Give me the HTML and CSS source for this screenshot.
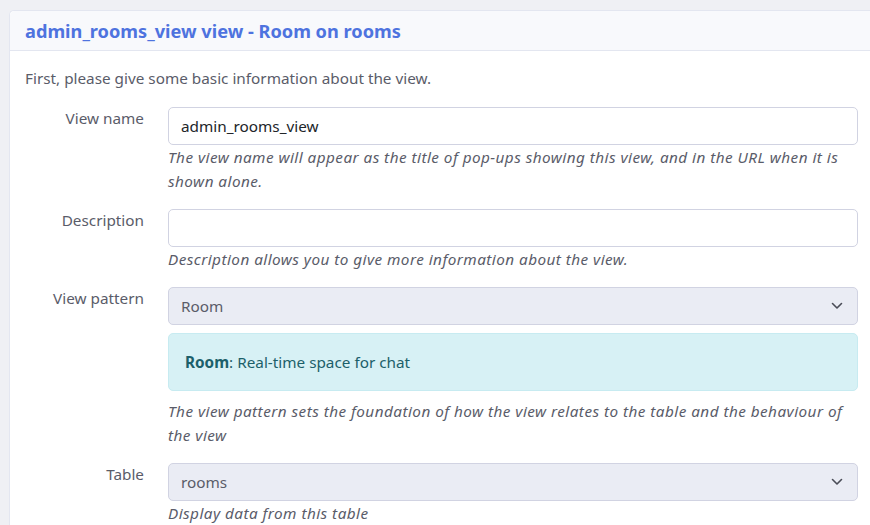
FILE: index.html
```html
<!DOCTYPE html>
<html>
<head>
<meta charset="utf-8">
<link rel="stylesheet" href="styles.css">
</head>
<body>
<div class="card">
  <div class="card-header">
    <h6 class="title">admin_rooms_view view - Room on rooms</h6>
  </div>
  <div class="card-body">
    <p class="intro">First, please give some basic information about the view.</p>
    <div class="row">
      <label class="label">View name</label>
      <div class="field">
        <div class="input">admin_rooms_view</div>
        <div class="help">The view name will appear as the title of pop-ups showing this view, and in the URL when it is shown alone.</div>
      </div>
    </div>
    <div class="row">
      <label class="label">Description</label>
      <div class="field">
        <div class="input"></div>
        <div class="help">Description allows you to give more information about the view.</div>
      </div>
    </div>
    <div class="row">
      <label class="label">View pattern</label>
      <div class="field">
        <div class="select">Room
          <svg class="chev" width="12" height="8" viewBox="0 0 12 8"><path d="M1.5 1.5 L6 6 L10.5 1.5" fill="none" stroke="#4a4c57" stroke-width="1.6" stroke-linecap="round" stroke-linejoin="round"/></svg>
        </div>
        <div class="alert"><b>Room</b>: Real-time space for chat</div>
        <div class="help">The view pattern sets the foundation of how the view relates to the table and the behaviour of the view</div>
      </div>
    </div>
    <div class="row">
      <label class="label">Table</label>
      <div class="field">
        <div class="select">rooms
          <svg class="chev" width="12" height="8" viewBox="0 0 12 8"><path d="M1.5 1.5 L6 6 L10.5 1.5" fill="none" stroke="#4a4c57" stroke-width="1.6" stroke-linecap="round" stroke-linejoin="round"/></svg>
        </div>
        <div class="help">Display data from this table</div>
      </div>
    </div>
  </div>
</div>
</body>
</html>
```
FILE: styles.css
```css
html, body {
  margin: 0;
  padding: 0;
  background: #eff0f4;
  overflow: hidden;
}
body {
  padding: 10px 0 0 9px;
  font-family: "Noto Sans", "Open Sans", sans-serif;
  font-size: 15.3px;
  line-height: 24px;
  color: #5a5c69;
}
.card {
  width: 880px;
  background: #fff;
  border: 1px solid #e3e6f0;
  border-right: none;
  border-radius: 5px 0 0 5px;
  height: 600px;
}
.card-header {
  background: #f8f9fc;
  border-bottom: 1px solid #e3e6f0;
  height: 39px;
  padding: 0 15px;
  display: flex;
  align-items: center;
  border-radius: 5px 0 0 0;
}
.title {
  margin: 0;
  font-size: 18.2px;
  font-weight: 700;
  color: #4e73df;
  line-height: 24px;
}
.card-body {
  padding: 15px 0 0 15px;
  width: 833px;
}
.intro {
  margin: 0 0 17px;
}
.row {
  display: grid;
  grid-template-columns: 119px 1fr;
  column-gap: 24px;
  margin-bottom: 16px;
}
.label {
  text-align: right;
  line-height: 24px;
  margin-top: -1px;
}
.field {
  display: flex;
  flex-direction: column;
}
.input, .select {
  height: 36px;
  border: 1px solid #d1d3e2;
  border-radius: 5px;
  padding: 0 12px;
  display: flex;
  align-items: center;
  color: #212529;
  background: #fff;
}
.select {
  background: #eaecf4;
  color: #5a5c69;
  justify-content: space-between;
  padding-right: 14px;
}
.alert {
  margin-top: 8px;
  height: 56px;
  background: #d7f1f5;
  border: 1px solid #c7ebf1;
  border-radius: 5px;
  color: #1c606a;
  display: flex;
  align-items: center;
  padding: 0 16px;
  margin-bottom: 8px;
}
.alert b {
  font-weight: 700;
}
.help {
  font-style: italic;
  color: #5a5c69;
  letter-spacing: 0.45px;
}
```
